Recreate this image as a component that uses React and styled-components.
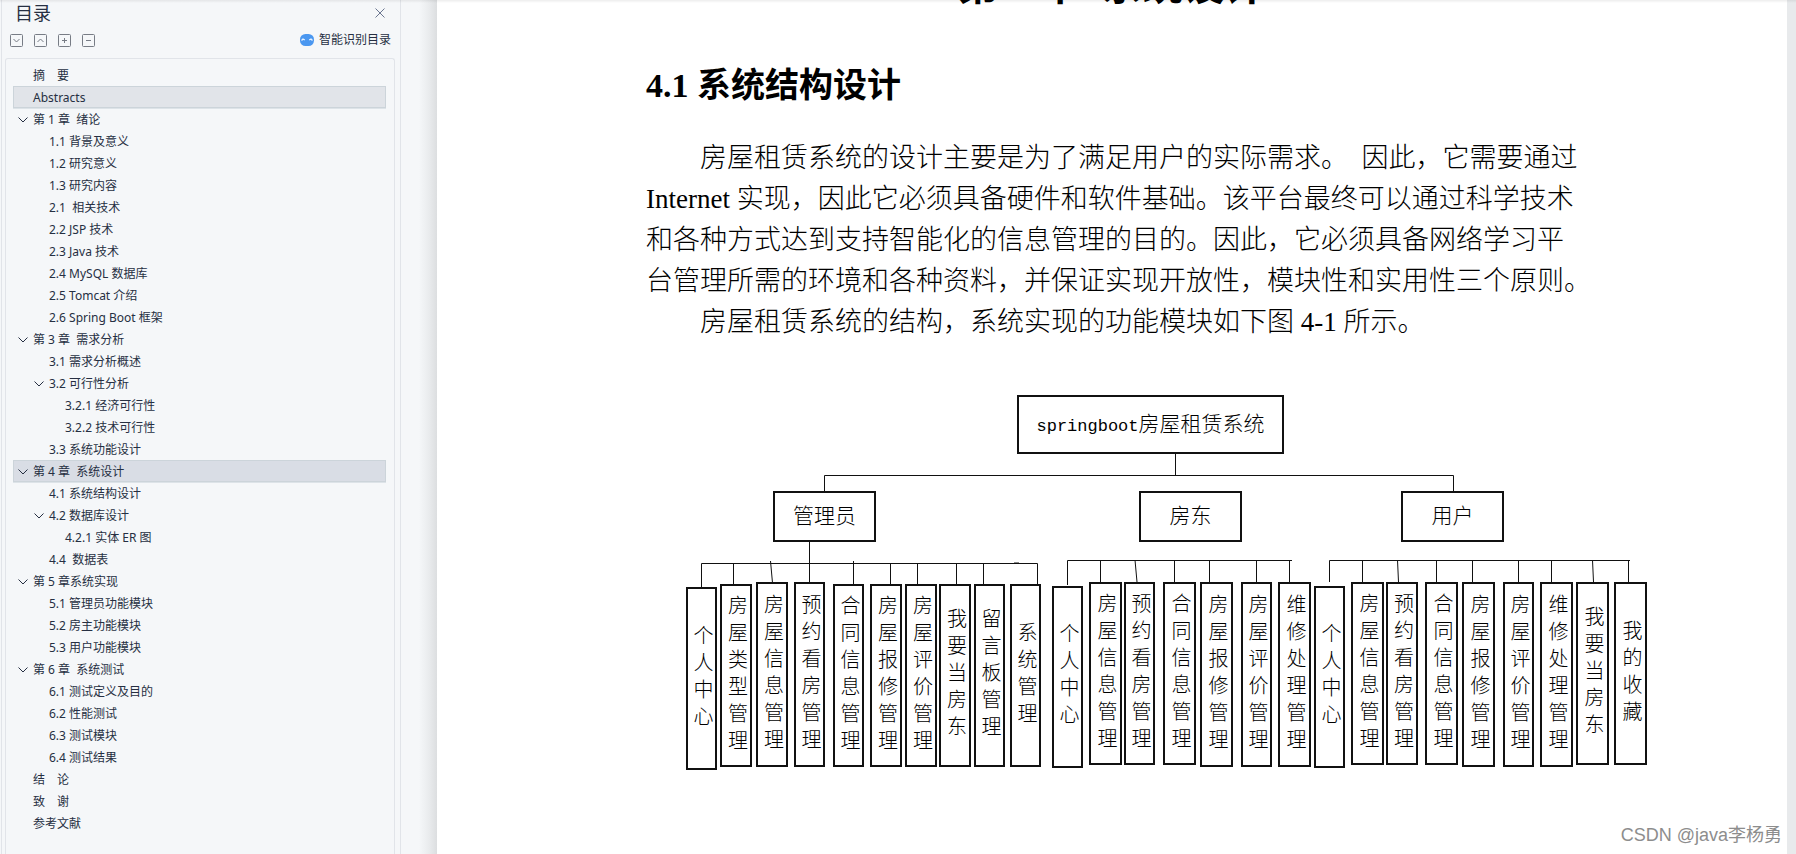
import React from "react";
import styled, { createGlobalStyle } from "styled-components";

const GlobalStyle = createGlobalStyle`
  *, *::before, *::after { box-sizing: border-box; }
  body {
    margin: 0;
    background: #f5f7f9;
    color: #000;
    font-family: "Liberation Serif", "Noto Sans CJK SC", serif;
  }
  h1, h2, p, ul, figure { margin: 0; padding: 0; }
  ul { list-style: none; }
  button { border: 0; padding: 0; background: none; font: inherit; color: inherit; cursor: pointer; }
`;

const Shell = styled.div`
  display: flex;
  height: 100vh;
  overflow: hidden;
  position: relative;
  &::before {
    content: "";
    position: absolute;
    inset: 0 0 auto 0;
    height: 3px;
    background: linear-gradient(rgba(0, 0, 0, 0.07), rgba(0, 0, 0, 0));
  }
`;

const Sidebar = styled.aside`
  flex: 0 0 400px;
  display: flex;
  flex-direction: column;
  margin-left: 1px;
  padding: 0 5px 0 3px;
  border: solid #e1e4e9;
  border-width: 0 1px;
  color: #262f42;
  font-family: "Noto Sans", "Noto Sans CJK SC", sans-serif;
  font-size: 12px;
`;

const TitleRow = styled.div`
  display: flex;
  justify-content: space-between;
  align-items: center;
  height: 26px;
  padding: 0 10px;
`;

const PanelTitle = styled.h2`
  font-size: 18px;
  font-weight: 400;
  line-height: 26px;
`;

const CloseButton = styled.button`
  display: flex;
  color: #6b7690;
`;

const Toolbar = styled.div`
  display: flex;
  align-items: center;
  height: 28px;
  padding: 0 4px 0 5px;
  gap: 11px;
`;

const ToolButton = styled.button`
  display: flex;
  color: #777c85;
`;

const SmartButton = styled.button`
  display: flex;
  align-items: center;
  gap: 5px;
  margin-left: auto;
  line-height: 18px;
`;

const TreeBox = styled.nav`
  flex: 1;
  margin-top: 4px;
  padding: 5px 8px 0 7px;
  border: 1px solid #e1e4e9;
  border-bottom: 0;
  border-radius: 3px 3px 0 0;
`;

const fills = { hover: "#e1e4e9", current: "#d9dde5" };

const TreeLink = styled.a`
  display: flex;
  align-items: center;
  height: 22px;
  padding-left: ${(p) => 4 + p.$level * 16}px;
  color: inherit;
  text-decoration: none;
  white-space: pre;
  background: ${(p) => fills[p.$state] || "transparent"};
  box-shadow: ${(p) => (p.$state ? "inset 0 0 0 1px #ccd4da, 0 1px #dde3e8" : "none")};
`;

const ChevronSlot = styled.span`
  display: flex;
  flex: 0 0 16px;
`;

const Gutter = styled.div`
  flex: 0 0 36px;
  background: linear-gradient(to right, #f5f7f9 50%, #e9ebed 78%, #dcdee0);
`;

const Sheet = styled.main`
  flex: 1;
  min-width: 0;
  padding: 0 210px 0 209px;
  background: #fff;
`;

const ChapterTitle = styled.h1`
  margin-top: -38px;
  font-size: 41px;
  line-height: 48px;
  text-align: center;
  white-space: pre;
`;

const SectionTitle = styled.h2`
  margin: 56px 0 32px;
  font-size: 34px;
  line-height: 40px;
`;

const Paragraph = styled.p`
  font-size: 27px;
  font-weight: 300;
  line-height: 41px;
  text-indent: 2em;
  white-space: pre;
`;

const RightEdge = styled.div`
  flex: 0 0 9px;
  background: #e8eaec;
`;

const Figure = styled.figure`
  position: relative;
  width: 961px;
  height: 375px;
  margin: 52px 0 0 40px;
  font-weight: 300;
`;

const Connectors = styled.svg`
  position: absolute;
  inset: 0;
  overflow: visible;
`;

const Node = styled.div`
  position: absolute;
  left: ${(p) => p.$x}px;
  top: ${(p) => p.$y}px;
  width: ${(p) => p.$w}px;
  height: ${(p) => p.$h}px;
  display: flex;
  align-items: center;
  justify-content: center;
  padding-bottom: 6px;
  border: 2px solid #111;
  background: #fff;
  font-size: 21px;
  white-space: nowrap;
`;

const Mono = styled.span`
  font-family: "Liberation Mono", monospace;
  font-size: 17px;
`;

const Leaf = styled(Node)`
  padding: 0 0 4px 4px;
  font-size: 20px;
  line-height: 27px;
`;

const LeafText = styled.span`
  width: 20px;
  white-space: normal;
  word-break: break-all;
`;

const Watermark = styled.div`
  position: absolute;
  right: 14px;
  bottom: 6px;
  color: #8d8d8d;
  font-family: "Liberation Sans", "Noto Sans CJK SC", sans-serif;
  font-size: 18px;
  line-height: 26px;
`;

const outline = [
  ["摘　要", 0],
  ["Abstracts", 0, false, "hover"],
  ["第 1 章  绪论", 0, true],
  ["1.1 背景及意义", 1],
  ["1.2 研究意义", 1],
  ["1.3 研究内容", 1],
  ["2.1  相关技术", 1],
  ["2.2 JSP 技术", 1],
  ["2.3 Java 技术", 1],
  ["2.4 MySQL 数据库", 1],
  ["2.5 Tomcat 介绍", 1],
  ["2.6 Spring Boot 框架", 1],
  ["第 3 章  需求分析", 0, true],
  ["3.1 需求分析概述", 1],
  ["3.2 可行性分析", 1, true],
  ["3.2.1 经济可行性", 2],
  ["3.2.2 技术可行性", 2],
  ["3.3 系统功能设计", 1],
  ["第 4 章  系统设计", 0, true, "current"],
  ["4.1 系统结构设计", 1],
  ["4.2 数据库设计", 1, true],
  ["4.2.1 实体 ER 图", 2],
  ["4.4  数据表", 1],
  ["第 5 章系统实现", 0, true],
  ["5.1 管理员功能模块", 1],
  ["5.2 房主功能模块", 1],
  ["5.3 用户功能模块", 1],
  ["第 6 章  系统测试", 0, true],
  ["6.1 测试定义及目的", 1],
  ["6.2 性能测试", 1],
  ["6.3 测试模块", 1],
  ["6.4 测试结果", 1],
  ["结　论", 0],
  ["致　谢", 0],
  ["参考文献", 0],
];

const roles = [
  ["管理员", 87],
  ["房东", 453],
  ["用户", 715],
];

/* label, left, top, width, height */
const leaves = [
  ["个人中心", 0, 192, 31, 183],
  ["房屋类型管理", 34, 189, 32, 183],
  ["房屋信息管理", 70, 187, 32, 185],
  ["预约看房管理", 108, 187, 31, 185],
  ["合同信息管理", 147, 189, 31, 183],
  ["房屋报修管理", 184, 189, 32, 183],
  ["房屋评价管理", 219, 189, 32, 183],
  ["我要当房东", 253, 189, 32, 183],
  ["留言板管理", 288, 189, 31, 183],
  ["系统管理", 324, 189, 31, 183],
  ["个人中心", 366, 191, 31, 182],
  ["房屋信息管理", 403, 187, 33, 183],
  ["预约看房管理", 438, 187, 31, 183],
  ["合同信息管理", 477, 187, 33, 183],
  ["房屋报修管理", 514, 187, 33, 185],
  ["房屋评价管理", 555, 187, 31, 185],
  ["维修处理管理", 592, 187, 33, 185],
  ["个人中心", 628, 191, 31, 182],
  ["房屋信息管理", 665, 187, 33, 183],
  ["预约看房管理", 700, 187, 32, 183],
  ["合同信息管理", 739, 187, 33, 183],
  ["房屋报修管理", 776, 187, 33, 185],
  ["房屋评价管理", 817, 187, 31, 185],
  ["维修处理管理", 854, 187, 33, 185],
  ["我要当房东", 890, 187, 33, 183],
  ["我的收藏", 928, 187, 33, 183],
];

const wires = [
  "M489.5 59V81 M464 80.5H491 M138.5 96V80.5H767.5V96",
  "M123.5 147V188 M15.5 192V168.5H351.5V189 M328 168H333",
  "M47.5 168V189 M84.5 166L86.5 188 M167.5 166V189 M204.5 168V189 M231.5 168V189 M270.5 168V189 M297.5 168V189",
  "M381.5 190V165.5H606 M414.5 165V187 M449 165L451 187 M488.5 165V187 M523.5 165V187 M570.5 165V187 M603.5 166V187",
  "M643.5 187V165.5H944 M676.5 165V187 M711.5 165L712.5 187 M750.5 165V187 M786.5 165V187 M832.5 165V187 M865.5 166V187 M906.5 165L907.5 187 M942.5 165V187",
];

const tools = [
  ["全部展开", "M3.5 5L6.5 8L9.5 5"],
  ["全部收起", "M3.5 8L6.5 5L9.5 8"],
  ["展开一级", "M4 6.5H9M6.5 4V9"],
  ["收起一级", "M4 6.5H9"],
];

function Chevron() {
  return (
    <svg width="12" height="12" viewBox="0 0 12 12" fill="none" stroke="currentColor" aria-hidden="true">
      <path d="M1.5 4.5L6 9L10.5 4.5" />
    </svg>
  );
}

function Outline() {
  return (
    <Sidebar>
      <TitleRow>
        <PanelTitle>目录</PanelTitle>
        <CloseButton aria-label="关闭">
          <svg width="10" height="10" viewBox="0 0 10 10" fill="none" stroke="currentColor">
            <path d="M0.5 0.5L9.5 9.5M9.5 0.5L0.5 9.5" />
          </svg>
        </CloseButton>
      </TitleRow>
      <Toolbar>
        {tools.map(([label, d]) => (
          <ToolButton key={label} aria-label={label}>
            <svg width="13" height="13" viewBox="0 0 13 13" fill="none" stroke="currentColor">
              <rect x="0.5" y="0.5" width="12" height="12" rx="1" />
              <path d={d} />
            </svg>
          </ToolButton>
        ))}
        <SmartButton>
          <svg width="14" height="12" viewBox="0 0 14 12" aria-hidden="true">
            <rect width="14" height="12" rx="5.5" fill="#4a97f0" />
            <path d="M1.5 6.5L3 5L4.8 6M9.2 6L11 5L12.5 6.5" stroke="#e6f1ff" strokeWidth="1.4" fill="none" />
          </svg>
          智能识别目录
        </SmartButton>
      </Toolbar>
      <TreeBox aria-label="目录">
        <ul>
          {outline.map(([label, level, open, state], i) => (
            <li key={i}>
              <TreeLink href={`#s${i}`} $level={level} $state={state}>
                <ChevronSlot>{open && <Chevron />}</ChevronSlot>
                {label}
              </TreeLink>
            </li>
          ))}
        </ul>
      </TreeBox>
    </Sidebar>
  );
}

function StructureChart() {
  return (
    <Figure>
      <Connectors width="961" height="375" fill="none" stroke="#111" aria-hidden="true">
        {wires.map((d) => (
          <path key={d} d={d} />
        ))}
      </Connectors>
      <Node $x={331} $y={0} $w={267} $h={59}>
        <span>
          <Mono>springboot</Mono>房屋租赁系统
        </span>
      </Node>
      {roles.map(([label, x]) => (
        <Node key={label} $x={x} $y={96} $w={103} $h={51}>{label}</Node>
      ))}
      {leaves.map(([label, x, y, w, h]) => (
        <Leaf key={x} $x={x} $y={y} $w={w} $h={h}>
          <LeafText>{label}</LeafText>
        </Leaf>
      ))}
    </Figure>
  );
}

export default function App() {
  return (
    <>
      <GlobalStyle />
      <Shell>
        <Outline />
        <Gutter />
        <Sheet lang="zh-CN">
          <ChapterTitle>第 4 章  系统设计</ChapterTitle>
          <SectionTitle>4.1 系统结构设计</SectionTitle>
          <Paragraph>
            房屋租赁系统的设计主要是为了满足用户的实际需求。  因此，它需要通过<br />
            Internet 实现，因此它必须具备硬件和软件基础。该平台最终可以通过科学技术<br />
            和各种方式达到支持智能化的信息管理的目的。因此，它必须具备网络学习平<br />
            台管理所需的环境和各种资料，并保证实现开放性，模块性和实用性三个原则。
          </Paragraph>
          <Paragraph>房屋租赁系统的结构，系统实现的功能模块如下图 4-1 所示。</Paragraph>
          <StructureChart />
        </Sheet>
        <RightEdge />
        <Watermark>CSDN @java李杨勇</Watermark>
      </Shell>
    </>
  );
}
